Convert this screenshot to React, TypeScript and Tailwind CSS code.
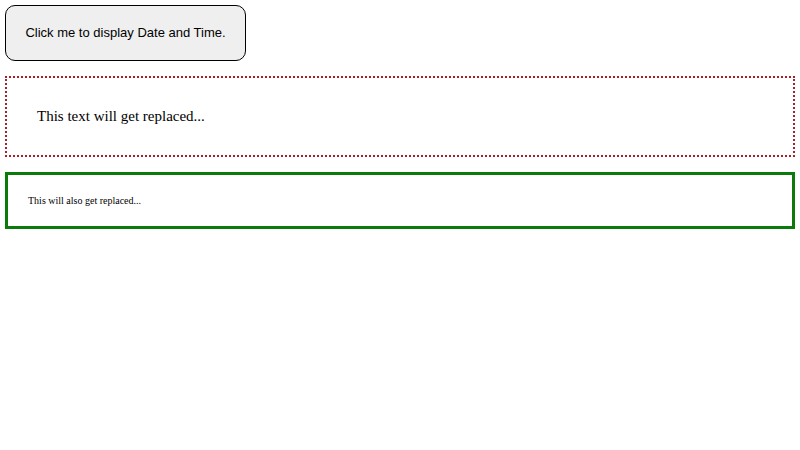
export default function App() {
  return (
    <div className="flex min-h-[450px] flex-col items-start gap-[15px] bg-white p-[5px]">
      <button
        type="button"
        className="h-[56px] w-[241px] rounded-[10px] border border-black bg-[#efefef] font-['Liberation_Sans',Arial,sans-serif] text-[13px] text-black"
      >
        Click me to display Date and Time.
      </button>

      <div className="w-full border-2 border-dotted border-[#a8202a] p-[30px] font-['Liberation_Serif','Times_New_Roman',serif] text-[15px] leading-[17px] text-black">
        This text will get replaced...
      </div>

      <div className="w-full border-[3px] border-solid border-[#0a7a0a] p-[20px] font-['Liberation_Serif','Times_New_Roman',serif] text-[10px] leading-[11px] text-black">
        This will also get replaced...
      </div>
    </div>
  );
}
